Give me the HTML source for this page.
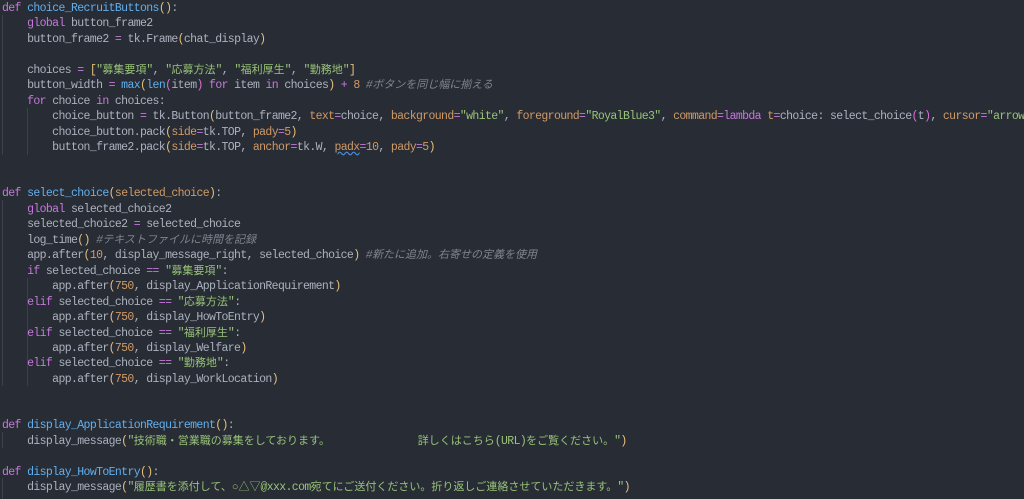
<!DOCTYPE html>
<html><head><meta charset="utf-8"><style>
html,body{margin:0;padding:0;background:#282c34;width:1024px;height:499px;overflow:hidden}
pre{margin:0;position:absolute;left:2px;top:1px;font-family:"Liberation Mono","Noto Sans CJK JP",monospace;font-size:11.5px;letter-spacing:-0.63px;line-height:15.45px;color:#abb2bf;white-space:pre}
.k{color:#c678dd}.f{color:#61afef}.s{color:#98c379}.n{color:#d19a66}.p{color:#d19a66}.o{color:#c678dd}
.b1{color:#e5c07b}.b2{color:#da70d6}.c{color:#7f848e;font-style:italic}
.j{font-size:11px;letter-spacing:0;line-height:0}
.g{position:absolute;width:1px;background:#3b404a}
</style></head><body>
<div class="g" style="left:2px;top:15px;height:140px"></div>
<div class="g" style="left:27px;top:108px;height:47px"></div>
<div class="g" style="left:2px;top:200px;height:186px"></div>
<div class="g" style="left:27px;top:278px;height:108px"></div>
<div class="g" style="left:2px;top:432px;height:16px"></div>
<div class="g" style="left:2px;top:478px;height:21px"></div>
<pre><span class="k">def</span> <span class="f">choice_RecruitButtons</span><span class="b1">()</span>:
    <span class="k">global</span> button_frame2
    button_frame2 <span class="o">=</span> tk.Frame<span class="b1">(</span>chat_display<span class="b1">)</span>

    choices <span class="o">=</span> <span class="b1">[</span><span class="s">"<span class="j">募集要項</span>"</span>, <span class="s">"<span class="j">応募方法</span>"</span>, <span class="s">"<span class="j">福利厚生</span>"</span>, <span class="s">"<span class="j">勤務地</span>"</span><span class="b1">]</span>
    button_width <span class="o">=</span> <span class="f">max</span><span class="b1">(</span><span class="f">len</span><span class="b2">(</span>item<span class="b2">)</span> <span class="k">for</span> item <span class="k">in</span> choices<span class="b1">)</span> <span class="o">+</span> <span class="n">8</span> <span class="c">#<span class="j">ボタンを同じ幅に揃える</span></span>
    <span class="k">for</span> choice <span class="k">in</span> choices:
        choice_button <span class="o">=</span> tk.Button<span class="b1">(</span>button_frame2, <span class="p">text</span><span class="o">=</span>choice, <span class="p">background</span><span class="o">=</span><span class="s">"white"</span>, <span class="p">foreground</span><span class="o">=</span><span class="s">"RoyalBlue3"</span>, <span class="p">command</span><span class="o">=</span><span class="k">lambda</span> <span class="p">t</span><span class="o">=</span>choice: select_choice<span class="b2">(</span>t<span class="b2">)</span>, <span class="p">cursor</span><span class="o">=</span><span class="s">"arrow"</span><span class="b1">)</span>
        choice_button.pack<span class="b1">(</span><span class="p">side</span><span class="o">=</span>tk.TOP, <span class="p">pady</span><span class="o">=</span><span class="n">5</span><span class="b1">)</span>
        button_frame2.pack<span class="b1">(</span><span class="p">side</span><span class="o">=</span>tk.TOP, <span class="p">anchor</span><span class="o">=</span>tk.W, <span class="p" style="text-decoration:underline wavy #4a8ee0">padx</span><span class="o">=</span><span class="n">10</span>, <span class="p">pady</span><span class="o">=</span><span class="n">5</span><span class="b1">)</span>


<span class="k">def</span> <span class="f">select_choice</span><span class="b1">(</span><span class="p">selected_choice</span><span class="b1">)</span>:
    <span class="k">global</span> selected_choice2
    selected_choice2 <span class="o">=</span> selected_choice
    log_time<span class="b1">()</span> <span class="c">#<span class="j">テキストファイルに時間を記録</span></span>
    app.after<span class="b1">(</span><span class="n">10</span>, display_message_right, selected_choice<span class="b1">)</span> <span class="c">#<span class="j">新たに追加。右寄せの定義を使用</span></span>
    <span class="k">if</span> selected_choice <span class="o">==</span> <span class="s">"<span class="j">募集要項</span>"</span>:
        app.after<span class="b1">(</span><span class="n">750</span>, display_ApplicationRequirement<span class="b1">)</span>
    <span class="k">elif</span> selected_choice <span class="o">==</span> <span class="s">"<span class="j">応募方法</span>"</span>:
        app.after<span class="b1">(</span><span class="n">750</span>, display_HowToEntry<span class="b1">)</span>
    <span class="k">elif</span> selected_choice <span class="o">==</span> <span class="s">"<span class="j">福利厚生</span>"</span>:
        app.after<span class="b1">(</span><span class="n">750</span>, display_Welfare<span class="b1">)</span>
    <span class="k">elif</span> selected_choice <span class="o">==</span> <span class="s">"<span class="j">勤務地</span>"</span>:
        app.after<span class="b1">(</span><span class="n">750</span>, display_WorkLocation<span class="b1">)</span>


<span class="k">def</span> <span class="f">display_ApplicationRequirement</span><span class="b1">()</span>:
    display_message<span class="b1">(</span><span class="s">"<span class="j">技術職・営業職の募集をしております。</span>              <span class="j">詳しくはこちら</span>(URL)<span class="j">をご覧ください。</span>"</span><span class="b1">)</span>

<span class="k">def</span> <span class="f">display_HowToEntry</span><span class="b1">()</span>:
    display_message<span class="b1">(</span><span class="s">"<span class="j">履歴書を添付して、○△▽</span>@xxx.com<span class="j">宛てにご送付ください。折り返しご連絡させていただきます。</span>"</span><span class="b1">)</span>
</pre>
</body></html>
